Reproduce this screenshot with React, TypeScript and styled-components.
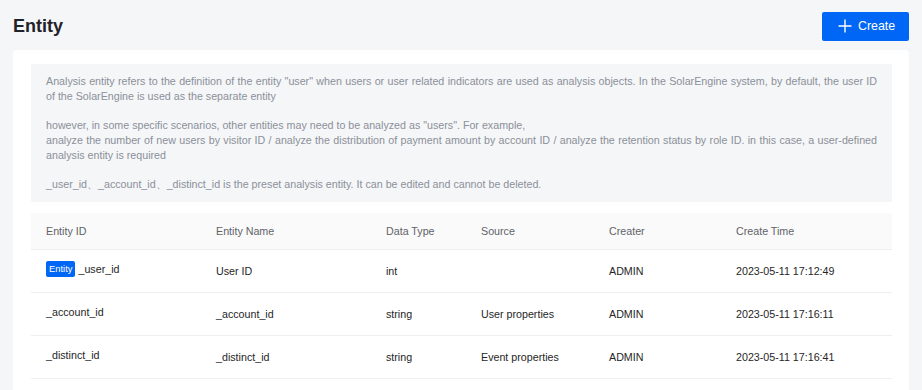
import { FC } from "react";
import styled, { createGlobalStyle } from "styled-components";

const GlobalStyle = createGlobalStyle`
  html, body {
    margin: 0;
    padding: 0;
    background: #f5f6f8;
    font-family: "Liberation Sans", Arial, sans-serif;
  }
`;

// Page wrapper with the grey background
const Page = styled.div`
  padding: 0 13px;
  min-height: 390px;
  box-sizing: border-box;
`;

const Header = styled.div`
  display: flex;
  align-items: center;
  justify-content: space-between;
  height: 50px;
  padding-top: 2px;
  box-sizing: border-box;
`;

const Title = styled.h1`
  margin: 0;
  font-size: 18px;
  font-weight: 700;
  color: #1f2329;
`;

const CreateButton = styled.button`
  display: flex;
  align-items: center;
  gap: 6px;
  width: 87px;
  height: 29px;
  padding: 0 0 0 16px;
  border: none;
  border-radius: 2px;
  background: #0066f5;
  color: #ffffff;
  font-family: "Liberation Sans", Arial, sans-serif;
  font-size: 12.4px;
  cursor: pointer;
`;

const Card = styled.div`
  background: #ffffff;
  border-radius: 4px 4px 0 0;
  padding: 14px 17px 30px 18px;
`;

// Description block, justified like the original
const Notice = styled.div`
  background: #f5f6f8;
  padding: 10px 15px 10px;
  color: #8b9099;
  font-size: 10.7px;
  line-height: 14.7px;
  text-align: justify;
  white-space: pre-wrap;
`;

const Table = styled.div`
  margin-top: 11px;
`;

const Row = styled.div<{ $head?: boolean }>`
  display: grid;
  grid-template-columns: 170px 170px 95px 128px 127px 1fr;
  height: ${(p) => (p.$head ? "37px" : "43px")};
  background: ${(p) => (p.$head ? "#fafafa" : "#ffffff")};
  border-bottom: 1px solid #eeeff1;
  box-sizing: border-box;
  font-size: 10.7px;
  color: ${(p) => (p.$head ? "#5f6268" : "#262626")};
`;

const Cell = styled.div<{ $lift?: boolean }>`
  display: flex;
  align-items: center;
  padding: 0 15px ${(p) => (p.$lift ? "4px" : "0")};
  white-space: nowrap;
`;

const Tag = styled.span`
  display: inline-block;
  background: #0066f5;
  color: #ffffff;
  font-size: 9.4px;
  line-height: 16px;
  padding: 0 3px;
  border-radius: 2px;
  margin-right: 3px;
`;

const PlusIcon: FC = () => (
  <svg width="14" height="14" viewBox="0 0 14 14" fill="none">
    <path d="M7 0.5v13M0.5 7h13" stroke="#fff" strokeWidth="1.4" />
  </svg>
);

const notice = `Analysis entity refers to the definition of the entity "user" when users or user related indicators are used as analysis objects. In the SolarEngine system, by default, the user ID of the SolarEngine is used as the separate entity

however, in some specific scenarios, other entities may need to be analyzed as "users". For example,
analyze the number of new users by visitor ID / analyze the distribution of payment amount by account ID / analyze the retention status by role ID. in this case, a user-defined analysis entity is required

_user_id、_account_id、_distinct_id is the preset analysis entity. It can be edited and cannot be deleted.`;

const columns = ["Entity ID", "Entity Name", "Data Type", "Source", "Creater", "Create Time"];

const rows = [
  { id: "_user_id", tag: true, name: "User ID", type: "int", source: "", creater: "ADMIN", time: "2023-05-11 17:12:49" },
  { id: "_account_id", tag: false, name: "_account_id", type: "string", source: "User properties", creater: "ADMIN", time: "2023-05-11 17:16:11" },
  { id: "_distinct_id", tag: false, name: "_distinct_id", type: "string", source: "Event properties", creater: "ADMIN", time: "2023-05-11 17:16:41" },
];

const App: FC = () => {
  return (
    <>
      <GlobalStyle />
      <Page>
        <Header>
          <Title>Entity</Title>
          <CreateButton>
            <PlusIcon />
            Create
          </CreateButton>
        </Header>
        <Card>
          <Notice>{notice}</Notice>
          <Table>
            <Row $head>
              {columns.map((c) => (
                <Cell key={c}>{c}</Cell>
              ))}
            </Row>
            {rows.map((r) => (
              <Row key={r.id}>
                <Cell $lift>
                  {r.tag && <Tag>Entity</Tag>}
                  {r.id}
                </Cell>
                <Cell>{r.name}</Cell>
                <Cell>{r.type}</Cell>
                <Cell>{r.source}</Cell>
                <Cell>{r.creater}</Cell>
                <Cell>{r.time}</Cell>
              </Row>
            ))}
          </Table>
        </Card>
      </Page>
    </>
  );
};

export default App;
